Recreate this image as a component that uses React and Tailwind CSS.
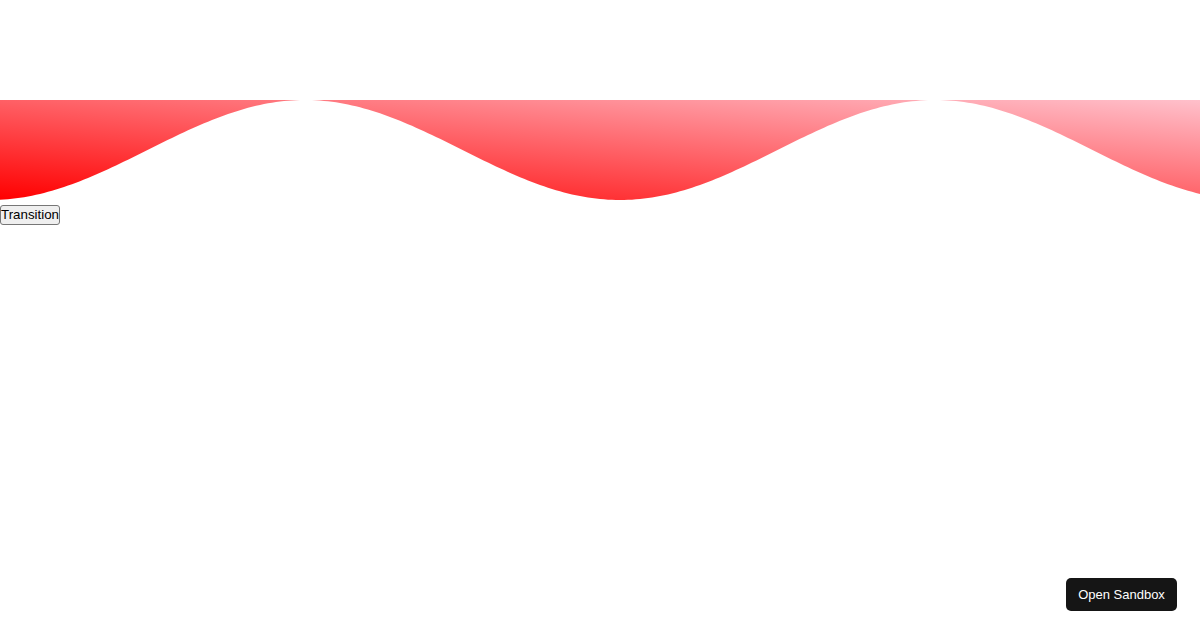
import React from "react";

// wave edge: troughs near x=-10, 620, 1250; peaks near 305, 935
const WIDTH = 1200;
const HEIGHT = 100;

function buildWave() {
  const pts = [];
  for (let x = 0; x <= WIDTH; x += 4) {
    const y = 50 + 50 * Math.cos((2 * Math.PI * (x + 10)) / 630);
    pts.push(`L${x},${y.toFixed(2)}`);
  }
  return `M0,0 ${pts.join(" ")} L${WIDTH},0 Z`;
}

const wavePath = buildWave();

function Wave() {
  return (
    <svg
      className="block h-[100px] w-full"
      viewBox={`0 0 ${WIDTH} ${HEIGHT}`}
      preserveAspectRatio="none"
    >
      <defs>
        <linearGradient id="waveGrad" x1="0" y1="1" x2="1" y2="0">
          <stop offset="0%" stopColor="#ff0000" />
          <stop offset="100%" stopColor="#ffc0cb" />
        </linearGradient>
      </defs>
      <path d={wavePath} fill="url(#waveGrad)" />
    </svg>
  );
}

export default function App() {
  return (
    <div className="relative min-h-[630px] w-full bg-white font-['Liberation_Sans',Arial,sans-serif]">
      <div className="flex flex-col items-start pt-[100px]">
        <Wave />
        <button className="mt-[5px] flex h-[20px] items-center rounded-[3px] border border-[#767676] bg-[#efefef] px-0 text-[13.33px] leading-none text-black">
          Transition
        </button>
      </div>

      <button className="fixed bottom-[19px] right-[23px] flex h-[33px] w-[111px] items-center justify-center rounded-[5px] bg-[#151515] text-[13px] text-white">
        Open Sandbox
      </button>
    </div>
  );
}
